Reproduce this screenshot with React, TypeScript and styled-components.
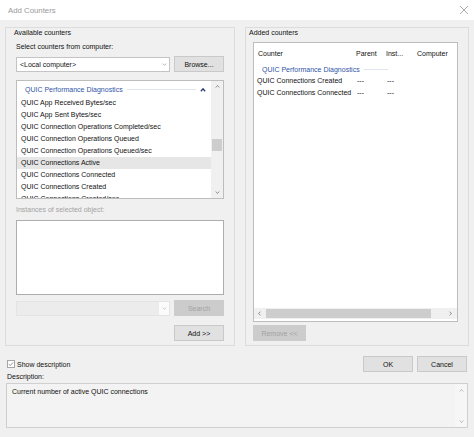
import React from 'react';
import styled, { createGlobalStyle } from 'styled-components';

const Global = createGlobalStyle`
  html, body { margin: 0; padding: 0; background: #f0f0f0; }
  body { font-family: "Liberation Sans", Arial, sans-serif; font-size: 7px; color: #111111; }
  * { box-sizing: border-box; }
`;

const Window = styled.div`
  width: 474px;
  height: 437px;
  display: flex;
  flex-direction: column;
  background: #f0f0f0;
  overflow: hidden;
`;

const TitleBar = styled.div`
  height: 20px;
  flex-shrink: 0;
  background: #ffffff;
  display: flex;
  align-items: center;
  justify-content: space-between;
  padding: 0 4px 0 8px;
  font-size: 7.8px;
  color: #999999;
`;

const Body = styled.div`
  flex: 1;
  padding: 7px 5px 0;
  display: flex;
  flex-direction: column;
`;

const Columns = styled.div`
  display: flex;
  gap: 10px;
`;

const Group = styled.div<{ $w: number; $pl: number; $pr: number }>`
  width: ${p => p.$w}px;
  height: 319px;
  border: 1px solid #dcdcdc;
  padding: 0 ${p => p.$pr}px 0 ${p => p.$pl}px;
  display: flex;
  flex-direction: column;
`;

const GroupLabel = styled.div<{ $ml: number }>`
  line-height: 10px;
  height: 10px;
  margin-left: ${p => p.$ml}px;
`;

const FieldLabel = styled.div<{ $mt: number; $disabled?: boolean }>`
  margin-top: ${p => p.$mt}px;
  line-height: 10px;
  height: 10px;
  color: ${p => (p.$disabled ? '#a3a3a3' : '#111111')};
`;

const Row = styled.div<{ $mt: number }>`
  margin-top: ${p => p.$mt}px;
  height: 16px;
  display: flex;
  align-items: center;
  justify-content: space-between;
`;

const Combo = styled.div<{ $disabled?: boolean }>`
  width: 154px;
  height: 15px;
  border: 1px solid ${p => (p.$disabled ? '#e4e4e4' : '#c4c4c4')};
  background: ${p => (p.$disabled ? '#ececec' : '#ffffff')};
  display: flex;
  align-items: center;
  justify-content: space-between;
  padding: 0 3px 0 3px;
`;

const ComboArrowBox = styled.div<{ $disabled?: boolean }>`
  width: 10px;
  height: 13px;
  margin-right: -3px;
  display: flex;
  align-items: center;
  justify-content: center;
  background: ${p => (p.$disabled ? '#fbfbfb' : 'transparent')};
`;

const Button = styled.div<{ $w: number; $disabled?: boolean }>`
  width: ${p => p.$w}px;
  height: 16px;
  flex-shrink: 0;
  display: flex;
  align-items: center;
  justify-content: center;
  background: ${p => (p.$disabled ? '#cccccc' : '#e1e1e1')};
  border: 1px solid ${p => (p.$disabled ? '#cccccc' : '#c9c9c9')};
  color: ${p => (p.$disabled ? '#a2a2a2' : '#111111')};
`;

const EndButton = styled(Button)<{ $mt: number; $align: string }>`
  margin-top: ${p => p.$mt}px;
  align-self: ${p => p.$align};
`;

const ListBox = styled.div`
  margin-top: 8px;
  height: 119px;
  border: 1px solid #bdbdbd;
  background: #ffffff;
  display: flex;
  overflow: hidden;
`;

const ListContent = styled.div`
  flex: 1;
  padding-top: 1px;
  overflow: hidden;
`;

const ListGroupHeader = styled.div`
  height: 15px;
  display: flex;
  align-items: center;
  padding: 0 5px 0 8px;
  color: #2f55a8;
  gap: 4px;
`;

const HeaderLine = styled.div<{ $grow?: boolean; $w?: number }>`
  height: 1px;
  background: #dfe4ee;
  flex: ${p => (p.$grow ? 1 : 'none')};
  width: ${p => (p.$w ? `${p.$w}px` : 'auto')};
`;

const ListItem = styled.div<{ $selected?: boolean }>`
  height: 12px;
  line-height: 12px;
  padding-left: 4px;
  white-space: nowrap;
  background: ${p => (p.$selected ? '#e6e6e6' : 'transparent')};
`;

const VScroll = styled.div<{ $bg: string }>`
  width: 12px;
  flex-shrink: 0;
  background: ${p => p.$bg};
  display: flex;
  flex-direction: column;
`;

const ArrowBox = styled.div<{ $h: number; $w: number }>`
  height: ${p => p.$h}px;
  width: ${p => p.$w}px;
  flex-shrink: 0;
  display: flex;
  align-items: center;
  justify-content: center;
`;

const VTrack = styled.div<{ $pt: number }>`
  flex: 1;
  padding-top: ${p => p.$pt}px;
`;

const VThumb = styled.div`
  height: 12px;
  margin: 0 1px;
  background: #cdcdcd;
`;

const InstBox = styled.div`
  margin-top: 5px;
  height: 75px;
  border: 1px solid #adadad;
  background: #ffffff;
`;

const ListView = styled.div`
  margin-top: 4px;
  height: 280px;
  border: 1px solid #bdbdbd;
  background: #ffffff;
  display: flex;
  flex-direction: column;
`;

const LVGrid = styled.div`
  display: grid;
  grid-template-columns: 98px 30px 31px 1fr;
`;

const LVHeader = styled(LVGrid)`
  height: 20px;
  padding-top: 6px;
  line-height: 10px;
`;

const HeadCell = styled.div`
  padding-left: 4px;
  white-space: nowrap;
  overflow: hidden;
`;

const LVGroupHeader = styled.div`
  height: 12px;
  display: flex;
  align-items: center;
  padding-left: 8px;
  gap: 4px;
  color: #2f55a8;
`;

const LVRow = styled(LVGrid)`
  height: 12px;
  line-height: 12px;
`;

const Cell = styled.div<{ $pl: number }>`
  padding-left: ${p => p.$pl}px;
  white-space: nowrap;
  overflow: hidden;
`;

const LVFill = styled.div`
  flex: 1;
`;

const HScroll = styled.div`
  height: 11px;
  margin-bottom: 2px;
  background: #f0f0f0;
  display: flex;
  align-items: stretch;
`;

const HThumb = styled.div`
  width: 165px;
  margin: 1px 0 1px 1px;
  background: #cdcdcd;
`;

const HTrack = styled.div`
  flex: 1;
`;

const BottomRow = styled.div`
  margin-top: 10px;
  height: 16px;
  display: flex;
  align-items: center;
  justify-content: space-between;
  padding: 0 2px;
`;

const CheckLabel = styled.label`
  display: flex;
  align-items: center;
  gap: 2px;
`;

const ButtonGroup = styled.div`
  display: flex;
  gap: 4px;
`;

const DescLabel = styled.div`
  height: 10px;
  line-height: 10px;
  margin-left: 2px;
`;

const DescBox = styled.div`
  margin: 1px 1px 0;
  height: 45px;
  border: 1px solid #cfcfcf;
  background: #f3f3f3;
  display: flex;
`;

const DescText = styled.div`
  flex: 1;
  padding: 3px 0 0 5px;
  line-height: 10px;
`;

const Chevron: React.FC<{ dir: 'up' | 'down' | 'left' | 'right'; color: string; size?: number; weight?: number }> = ({
  dir,
  color,
  size = 5,
  weight = 1,
}) => {
  const rot = { up: 0, right: 90, down: 180, left: 270 }[dir];
  return (
    <svg width={size} height={size} viewBox="0 0 10 10" style={{ transform: `rotate(${rot}deg)` }}>
      <polyline points="1.5,7 5,3 8.5,7" fill="none" stroke={color} strokeWidth={weight * 1.6} />
    </svg>
  );
};

const CloseIcon = () => (
  <svg width="12" height="12" viewBox="0 0 12 12">
    <path d="M2 2 L10 10 M10 2 L2 10" stroke="#a0a0a0" strokeWidth="0.9" />
  </svg>
);

const CheckBox = () => (
  <svg width="8" height="8" viewBox="0 0 8 8">
    <rect x="0.5" y="0.5" width="7" height="7" fill="#ffffff" stroke="#a6a6a6" strokeWidth="1" />
    <polyline points="1.8,4.1 3.3,5.6 6.2,2.4" fill="none" stroke="#8a8a8a" strokeWidth="0.9" />
  </svg>
);

const counters = [
  'QUIC App Received Bytes/sec',
  'QUIC App Sent Bytes/sec',
  'QUIC Connection Operations Completed/sec',
  'QUIC Connection Operations Queued',
  'QUIC Connection Operations Queued/sec',
  'QUIC Connections Active',
  'QUIC Connections Connected',
  'QUIC Connections Created',
  'QUIC Connections Created/sec',
];

const added = ['QUIC Connections Created', 'QUIC Connections Connected'];

export default function App() {
  return (
    <>
      <Global />
      <Window>
        <TitleBar>
          <span>Add Counters</span>
          <CloseIcon />
        </TitleBar>
        <Body>
          <Columns>
            <Group $w={230} $pl={10} $pr={10}>
              <GroupLabel $ml={-2}>Available counters</GroupLabel>
              <FieldLabel $mt={4}>Select counters from computer:</FieldLabel>
              <Row $mt={4}>
                <Combo>
                  <span>&lt;Local computer&gt;</span>
                  <ComboArrowBox>
                    <Chevron dir="down" color="#a8a8a8" size={5} />
                  </ComboArrowBox>
                </Combo>
                <Button $w={50}>Browse...</Button>
              </Row>
              <ListBox>
                <ListContent>
                  <ListGroupHeader>
                    <span>QUIC Performance Diagnostics</span>
                    <HeaderLine $grow />
                    <Chevron dir="up" color="#2a3f7a" size={6} weight={1.4} />
                  </ListGroupHeader>
                  {counters.map((c, i) => (
                    <ListItem key={c} $selected={i === 5}>
                      {c}
                    </ListItem>
                  ))}
                </ListContent>
                <VScroll $bg="#f0f0f0">
                  <ArrowBox $h={11} $w={12}>
                    <Chevron dir="up" color="#7a7a7a" size={5} />
                  </ArrowBox>
                  <VTrack $pt={47}>
                    <VThumb />
                  </VTrack>
                  <ArrowBox $h={11} $w={12}>
                    <Chevron dir="down" color="#7a7a7a" size={5} />
                  </ArrowBox>
                </VScroll>
              </ListBox>
              <FieldLabel $mt={6} $disabled>
                Instances of selected object:
              </FieldLabel>
              <InstBox />
              <Row $mt={5}>
                <Combo $disabled>
                  <span />
                  <ComboArrowBox $disabled>
                    <Chevron dir="down" color="#c8c8c8" size={5} />
                  </ComboArrowBox>
                </Combo>
                <Button $w={50} $disabled>
                  Search
                </Button>
              </Row>
              <EndButton $w={50} $mt={9} $align="flex-end">
                Add &gt;&gt;
              </EndButton>
            </Group>
            <Group $w={224} $pl={7} $pr={10}>
              <GroupLabel $ml={-4}>Added counters</GroupLabel>
              <ListView>
                <LVHeader>
                  <HeadCell>Counter</HeadCell>
                  <HeadCell>Parent</HeadCell>
                  <HeadCell>Inst...</HeadCell>
                  <HeadCell>Computer</HeadCell>
                </LVHeader>
                <LVGroupHeader>
                  <span>QUIC Performance Diagnostics</span>
                  <HeaderLine $w={24} />
                </LVGroupHeader>
                {added.map(a => (
                  <LVRow key={a}>
                    <Cell $pl={3}>{a}</Cell>
                    <Cell $pl={5}>---</Cell>
                    <Cell $pl={5}>---</Cell>
                    <Cell $pl={5} />
                  </LVRow>
                ))}
                <LVFill />
                <HScroll>
                  <ArrowBox $h={11} $w={11}>
                    <Chevron dir="left" color="#7a7a7a" size={5} />
                  </ArrowBox>
                  <HThumb />
                  <HTrack />
                  <ArrowBox $h={11} $w={13}>
                    <Chevron dir="right" color="#7a7a7a" size={5} />
                  </ArrowBox>
                </HScroll>
              </ListView>
              <EndButton $w={53} $mt={3} $align="flex-start" $disabled>
                Remove &lt;&lt;
              </EndButton>
            </Group>
          </Columns>
          <BottomRow>
            <CheckLabel>
              <CheckBox />
              <span>Show description</span>
            </CheckLabel>
            <ButtonGroup>
              <Button $w={50}>OK</Button>
              <Button $w={50}>Cancel</Button>
            </ButtonGroup>
          </BottomRow>
          <DescLabel>Description:</DescLabel>
          <DescBox>
            <DescText>Current number of active QUIC connections</DescText>
            <VScroll $bg="#f6f6f6">
              <ArrowBox $h={12} $w={12}>
                <Chevron dir="up" color="#b0b0b0" size={5} />
              </ArrowBox>
              <VTrack $pt={0} />
              <ArrowBox $h={12} $w={12}>
                <Chevron dir="down" color="#b0b0b0" size={5} />
              </ArrowBox>
            </VScroll>
          </DescBox>
        </Body>
      </Window>
    </>
  );
}
